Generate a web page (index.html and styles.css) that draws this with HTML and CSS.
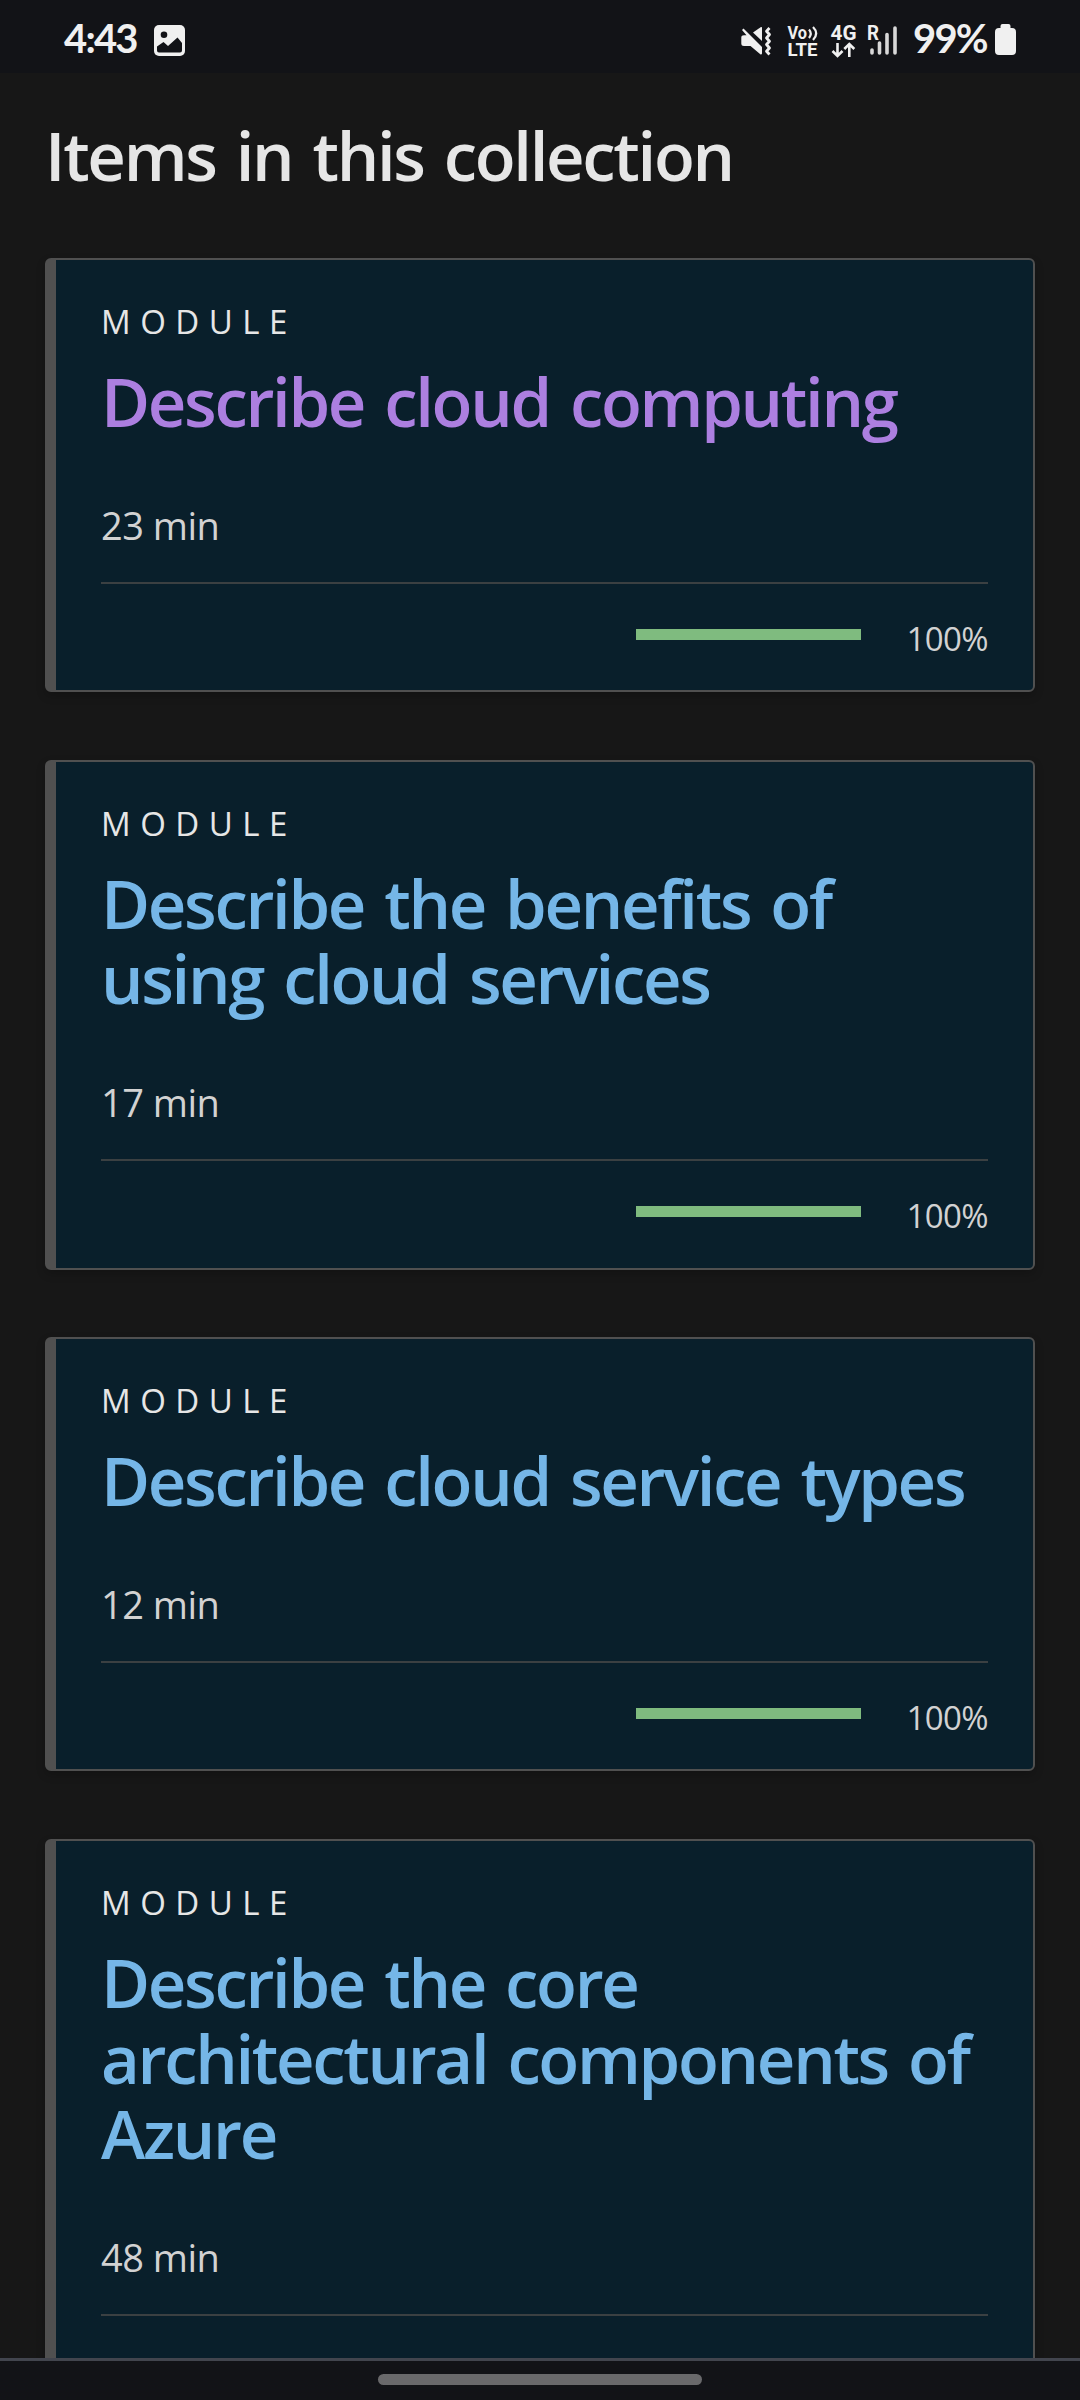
FILE: index.html
```html
<!DOCTYPE html>
<html lang="en">
<head>
    <meta charset="UTF-8">
    <meta name="viewport" content="width=device-width, initial-scale=1.0">
    <title>Items in this collection</title>
    <link rel="stylesheet" href="styles.css">
</head>
<body>
    <div class="screen">
        <header class="status-bar">
            <div class="status-left">
                <span class="clock">4:43</span>
                <svg class="icon-picture" width="31" height="31" viewBox="0 0 31 31">
                    <rect width="31" height="31" rx="5" fill="#f0f0f0"/>
                    <circle cx="10" cy="9.7" r="3.3" fill="#121317"/>
                    <path d="M3 21.5L9.5 17L14 21L23.5 12.5L28 18V25.5Q28 27.5 26 27.5H5Q3 27.5 3 25.5Z" fill="#121317"/>
                </svg>
            </div>
            <div class="status-right">
                <svg width="160" height="40" viewBox="740 20 160 40">
                    <!-- muted / vibrate -->
                    <path d="M743.5 28.5L762 47V53.5Q761.5 55.3 760 54L750.5 46H744Q741.3 46 741.3 43.5V37.5Q741.3 35.3 744 35.3H746.5L742 30Z" fill="#f0f0f0"/>
                    <path d="M753 32.5L761 27Q762 26.5 762 28V41Z" fill="#f0f0f0"/>
                    <path d="M769.5 28L766.5 31.2L769.5 34.5L766.5 38L769.5 41.2L766.5 44.5L769.5 48L766.5 51.2L769.5 54.5" fill="none" stroke="#f0f0f0" stroke-width="2.8" stroke-linejoin="round"/>
                    <!-- volte -->
                    <text class="tiny" x="787.5" y="39" textLength="19.5" lengthAdjust="spacingAndGlyphs">Vo</text>
                    <path d="M809 29.5Q812.5 33.5 809 38M813 27Q819.5 33.5 813 40" fill="none" stroke="#f0f0f0" stroke-width="2.2"/>
                    <text class="tiny" x="787.5" y="56" textLength="30" lengthAdjust="spacingAndGlyphs">LTE</text>
                    <!-- 4g -->
                    <text class="tiny big" x="830.5" y="39.5" textLength="26" lengthAdjust="spacingAndGlyphs">4G</text>
                    <path d="M837.5 43V56M832.5 51L837.5 56L842.5 51M849.3 57V44M844.3 49L849.3 44L854.3 49" fill="none" stroke="#f0f0f0" stroke-width="2.6"/>
                    <!-- signal -->
                    <text class="tiny big" x="867" y="39.5" textLength="12" lengthAdjust="spacingAndGlyphs">R</text>
                    <path d="M872 50V53M879.5 43V53M887 34.5V53M895 28V53" stroke="#d8d8d8" stroke-width="3.6" stroke-linecap="round"/>
                </svg>
                <span class="percent">99%</span>
                <svg class="icon-battery" width="21" height="31" viewBox="0 0 21 31">
                    <path d="M5.5 4V2Q5.5 0 7.5 0H13.5Q15.5 0 15.5 2V4H17Q21 4 21 8V27Q21 31 17 31H4Q0 31 0 27V8Q0 4 4 4Z" fill="#f0f0f0"/>
                </svg>
            </div>
        </header>

        <main class="content">
            <h1>Items in this collection</h1>

            <article class="card">
                <p class="type">MODULE</p>
                <h2><a class="visited" href="#">Describe cloud computing</a></h2>
                <p class="duration">23 min</p>
                <div class="card-footer">
                    <div class="progress"></div>
                    <span>100%</span>
                </div>
            </article>

            <article class="card">
                <p class="type">MODULE</p>
                <h2><a href="#">Describe the benefits of<br>using cloud services</a></h2>
                <p class="duration">17 min</p>
                <div class="card-footer">
                    <div class="progress"></div>
                    <span>100%</span>
                </div>
            </article>

            <article class="card">
                <p class="type">MODULE</p>
                <h2><a href="#">Describe cloud service types</a></h2>
                <p class="duration">12 min</p>
                <div class="card-footer">
                    <div class="progress"></div>
                    <span>100%</span>
                </div>
            </article>

            <article class="card">
                <p class="type">MODULE</p>
                <h2><a href="#">Describe the core<br>architectural components of<br>Azure</a></h2>
                <p class="duration">48 min</p>
                <div class="card-footer"></div>
            </article>
        </main>

        <nav class="nav-bar">
            <div class="handle"></div>
        </nav>
    </div>
</body>
</html>
```
FILE: styles.css
```css
* {
    box-sizing: border-box;
}
body {
    margin: 0;
    background-color: #171717;
    font-family: "Open Sans", "Noto Sans", sans-serif;
    color: #e6e6e6;
}
h1, h2, p {
    margin: 0;
}
.screen {
    display: flex;
    flex-direction: column;
    height: 2400px;
    overflow: hidden;
}

/* status bar */
.status-bar {
    flex: none;
    display: flex;
    justify-content: space-between;
    height: 73px;
    padding: 0 64px 0 64px;
    background-color: #121317;
    color: #f0f0f0;
}
.status-left,
.status-right {
    display: flex;
    align-items: flex-start;
}
.clock,
.percent {
    font-family: Lato, sans-serif;
    font-weight: 700;
    font-size: 40px;
    line-height: 48px;
    margin-top: 14px;
    letter-spacing: -1.8px;
}
.clock {
    width: 90px;
}
.icon-picture {
    margin-top: 25px;
}
.status-right svg {
    margin-top: 20px;
}
.status-right .icon-battery {
    margin-top: 24px;
}
.percent {
    width: 82px;
    margin-left: 13px;
    white-space: nowrap;
}
.tiny {
    font-family: Roboto, sans-serif;
    font-weight: 700;
    font-size: 17.5px;
    fill: #f0f0f0;
}
.tiny.big {
    font-size: 19.5px;
}

/* list */
.content {
    flex: 1;
    min-height: 0;
    overflow: hidden;
    padding: 42px 45px 0;
}
h1 {
    font-weight: 600;
    font-size: 67px;
    line-height: 80px;
    margin-bottom: 63px;
    letter-spacing: -2.3px;
    word-spacing: 5px;
    white-space: nowrap;
}
.card {
    margin-bottom: 67.5px;
    padding: 39px 45px 0;
    border: 2px solid #505050;
    border-left-width: 11px;
    border-radius: 6px;
    background-color: #091f2b;
    box-shadow: 0 4px 10px rgba(0, 0, 0, 0.2);
}
.type {
    font-size: 33px;
    line-height: 46px;
    letter-spacing: 9.5px;
}
.card h2 {
    margin-top: 19px;
    font-weight: 600;
    font-size: 67px;
    line-height: 75.8px;
    letter-spacing: -2.3px;
    word-spacing: 5px;
    white-space: nowrap;
}
.card a {
    color: #75b6e7;
    text-decoration: none;
}
.card a.visited {
    color: #ac7fe0;
}
.duration {
    margin-top: 59px;
    font-size: 38px;
    line-height: 52px;
    letter-spacing: -0.5px;
    color: #d2d2d2;
}
.card-footer {
    display: flex;
    justify-content: flex-end;
    height: 108.4px;
    margin-top: 31px;
    padding-top: 31px;
    border-top: 2px solid #3b4042;
    font-size: 33px;
    line-height: 47px;
    letter-spacing: -0.6px;
    color: #d2d2d2;
}
.card-footer span {
    width: 82px;
    margin-left: 45px;
    text-align: right;
}
.progress {
    width: 225px;
    height: 11px;
    margin-top: 14px;
    background-color: #7fbb7f;
}

/* gesture bar */
.nav-bar {
    flex: none;
    height: 42px;
    padding-top: 13px;
    border-top: 3px solid #42454e;
    background-color: #121317;
}
.handle {
    width: 324px;
    height: 11px;
    margin: 0 auto;
    border-radius: 6px;
    background-color: #69696b;
}
```
